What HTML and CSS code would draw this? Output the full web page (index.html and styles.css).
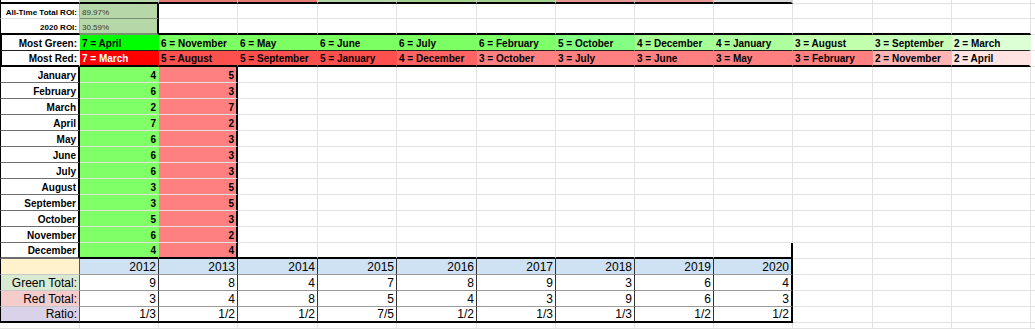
FILE: index.html
```html
<!DOCTYPE html>
<html>
<head>
<meta charset="utf-8">
<link rel="stylesheet" href="styles.css">
</head>
<body>
<div class="sheet">
  <!-- row 0 (partial) -->
  <div class="lb t0"></div>
  <div class="t0 tg"></div>
  <div class="t0 tr"></div>
  <div class="t0 tr"></div>
  <div class="t0 tg"></div>
  <div class="t0 tg2"></div>
  <div class="t0 tg2"></div>
  <div class="t0 tr2"></div>
  <div class="t0 tr2"></div>
  <div class="t0 tgray br2"></div>
  <div></div><div></div><div></div><div></div>

  <!-- row 1 -->
  <div class="lb lab8 ra">All-Time Total ROI:</div>
  <div class="roi">89.97%</div>
  <div></div><div></div><div></div><div></div><div></div><div></div><div></div><div></div><div></div><div></div><div></div><div></div>

  <!-- row 2 -->
  <div class="lb lab8 ra bb2">2020 ROI:</div>
  <div class="roi bb2">30.59%</div>
  <div class="bb2"></div><div class="bb2"></div><div class="bb2"></div><div class="bb2"></div><div class="bb2"></div><div class="bb2"></div><div class="bb2"></div><div class="bb2"></div><div class="bb2"></div><div class="bb2"></div><div class="bb2"></div><div></div>

  <!-- Most Green -->
  <div class="lb2 hlab ra hrow-g">Most Green:</div>
  <div class="h hrow-g g7">7 = April</div>
  <div class="h hrow-g g6">6 = November</div>
  <div class="h hrow-g g6">6 = May</div>
  <div class="h hrow-g g6">6 = June</div>
  <div class="h hrow-g g6">6 = July</div>
  <div class="h hrow-g g6b">6 = February</div>
  <div class="h hrow-g g5">5 = October</div>
  <div class="h hrow-g g4">4 = December</div>
  <div class="h hrow-g g4b">4 = January</div>
  <div class="h hrow-g g3">3 = August</div>
  <div class="h hrow-g g3b">3 = September</div>
  <div class="h hrow-g g2 br2">2 = March</div>
  <div></div>

  <!-- Most Red -->
  <div class="lb2 hlab ra bb2">Most Red:</div>
  <div class="h bb2 r7">7 = March</div>
  <div class="h bb2 r5">5 = August</div>
  <div class="h bb2 r5">5 = September</div>
  <div class="h bb2 r5">5 = January</div>
  <div class="h bb2 r4">4 = December</div>
  <div class="h bb2 r3">3 = October</div>
  <div class="h bb2 r3">3 = July</div>
  <div class="h bb2 r3">3 = June</div>
  <div class="h bb2 r3">3 = May</div>
  <div class="h bb2 r3">3 = February</div>
  <div class="h bb2 r2">2 = November</div>
  <div class="h bb2 r2b br2">2 = April</div>
  <div></div>

  <!-- months -->
  <div class="lb mon">January</div><div class="mg">4</div><div class="mr">5</div>
  <div></div><div></div><div></div><div></div><div></div><div></div><div></div><div></div><div></div><div></div><div></div>
  <div class="lb mon">February</div><div class="mg">6</div><div class="mr">3</div>
  <div></div><div></div><div></div><div></div><div></div><div></div><div></div><div></div><div></div><div></div><div></div>
  <div class="lb mon">March</div><div class="mg">2</div><div class="mr">7</div>
  <div></div><div></div><div></div><div></div><div></div><div></div><div></div><div></div><div></div><div></div><div></div>
  <div class="lb mon">April</div><div class="mg">7</div><div class="mr">2</div>
  <div></div><div></div><div></div><div></div><div></div><div></div><div></div><div></div><div></div><div></div><div></div>
  <div class="lb mon">May</div><div class="mg">6</div><div class="mr">3</div>
  <div></div><div></div><div></div><div></div><div></div><div></div><div></div><div></div><div></div><div></div><div></div>
  <div class="lb mon">June</div><div class="mg">6</div><div class="mr">3</div>
  <div></div><div></div><div></div><div></div><div></div><div></div><div></div><div></div><div></div><div></div><div></div>
  <div class="lb mon">July</div><div class="mg">6</div><div class="mr">3</div>
  <div></div><div></div><div></div><div></div><div></div><div></div><div></div><div></div><div></div><div></div><div></div>
  <div class="lb mon">August</div><div class="mg">3</div><div class="mr">5</div>
  <div></div><div></div><div></div><div></div><div></div><div></div><div></div><div></div><div></div><div></div><div></div>
  <div class="lb mon">September</div><div class="mg">3</div><div class="mr">5</div>
  <div></div><div></div><div></div><div></div><div></div><div></div><div></div><div></div><div></div><div></div><div></div>
  <div class="lb mon">October</div><div class="mg">5</div><div class="mr">3</div>
  <div></div><div></div><div></div><div></div><div></div><div></div><div></div><div></div><div></div><div></div><div></div>
  <div class="lb mon">November</div><div class="mg">6</div><div class="mr">2</div>
  <div></div><div></div><div></div><div></div><div></div><div></div><div></div><div></div><div></div><div></div><div></div>
  <div class="lb mon bb2">December</div><div class="mg bb2">4</div><div class="mr bb2">4</div>
  <div class="bb2"></div><div class="bb2"></div><div class="bb2"></div><div class="bb2"></div><div class="bb2"></div><div class="bb2"></div><div class="bb2 br2"></div><div></div><div></div><div></div><div></div>

  <!-- year header -->
  <div class="lb sum ya"></div>
  <div class="yv yr">2012</div><div class="yv yr">2013</div><div class="yv yr">2014</div><div class="yv yr">2015</div><div class="yv yr">2016</div><div class="yv yr">2017</div><div class="yv yr">2018</div><div class="yv yr">2019</div><div class="yv yr br2">2020</div>
  <div></div><div></div><div></div><div></div>

  <!-- green total -->
  <div class="lb sum sg">Green Total:</div>
  <div class="yv">9</div><div class="yv">8</div><div class="yv">4</div><div class="yv">7</div><div class="yv">8</div><div class="yv">9</div><div class="yv">3</div><div class="yv">6</div><div class="yv br2">4</div>
  <div></div><div></div><div></div><div></div>

  <!-- red total -->
  <div class="lb sum sr">Red Total:</div>
  <div class="yv">3</div><div class="yv">4</div><div class="yv">8</div><div class="yv">5</div><div class="yv">4</div><div class="yv">3</div><div class="yv">9</div><div class="yv">6</div><div class="yv br2">3</div>
  <div></div><div></div><div></div><div></div>

  <!-- ratio -->
  <div class="lb sum sp bb2">Ratio:</div>
  <div class="yv bb2">1/3</div><div class="yv bb2">1/2</div><div class="yv bb2">1/2</div><div class="yv bb2">7/5</div><div class="yv bb2">1/2</div><div class="yv bb2">1/3</div><div class="yv bb2">1/3</div><div class="yv bb2">1/2</div><div class="yv bb2 br2">1/2</div>
  <div></div><div></div><div></div><div></div>

  <!-- trailing row -->
  <div></div><div></div><div></div><div></div><div></div><div></div><div></div><div></div><div></div><div></div><div></div><div></div><div></div><div></div>
</div>
</body>
</html>
```

FILE: styles.css
```css
html, body {
  margin: 0;
  padding: 0;
  background: #ffffff;
}

body {
  font-family: "Liberation Sans", Arial, sans-serif;
  color: #000;
  overflow: hidden;
}

.sheet {
  display: grid;
  grid-template-columns: 80px 79px 79px 80px 79px 80px 79px 79px 79px 79px 80px 79px 79px 4px;
  grid-template-rows: 4px 15px 16px 16px 16px repeat(12, 16px) 16px 16px 16px 16px 6px;
  width: 1035px;
}

.sheet > div {
  box-sizing: border-box;
  border-right: 1px solid #e2e2e2;
  border-bottom: 1px solid #e2e2e2;
  overflow: hidden;
  white-space: nowrap;
  display: flex;
  align-items: flex-end;
  padding: 0 2px 1px 2px;
}

.ra { justify-content: flex-end; }

.lb { border-left: 1px solid #000; }
.lb2 { border-left: 2px solid #000; }
.sheet > .bb2 { border-bottom: 2px solid #000; }
.sheet > .br2 { border-right: 2px solid #000; }

/* top partial row */
.sheet > .t0 { border-bottom: 2px solid #000; border-right-color: #d0d0d0; }
.tg { background: #b6d7a8; }
.tg2 { background: #a4d38f; }
.tr { background: #e67c73; }
.tr2 { background: #ea9999; }
.tgray { background: #d9d9d9; }

/* ROI rows */
.lab8 {
  font-size: 8px;
  font-weight: bold;
  border-right-color: #b0b0b0 !important;
  border-bottom-color: #b0b0b0;
}
.roi {
  background: #b6d7a8;
  font-size: 8px;
  color: #3a3a3a;
  border-right: 2px solid #000 !important;
  border-bottom-color: #7a8f72 !important;
}

/* most green / red rows */
.hlab {
  font-size: 10px;
  font-weight: bold;
  border-right-color: transparent !important;
}
.h {
  font-size: 10px;
  font-weight: bold;
  border-right-color: transparent !important;
}
.sheet > .hrow-g { border-bottom: 1px solid #222; }
.sheet > .hlab.hrow-g { border-bottom: 1px solid #222; }

.g7 { background: #00ff00; }
.g6 { background: #7cff63; }
.g6b { background: #7fff6a; }
.g5 { background: #84ff84; }
.g4 { background: #a6ff94; }
.g4b { background: #acff9c; }
.g3 { background: #c2ffac; }
.g3b { background: #c8ffb8; }
.g2 { background: #dcffd6; }

.r7 { background: #ff0000; color: #fff; }
.r5 { background: #ff5050; }
.r4 { background: #ff6464; }
.r3 { background: #ff8080; }
.r2 { background: #ffb3b3; }
.r2b { background: #ffe3e3; }

/* months */
.mon {
  font-size: 10px;
  font-weight: bold;
  justify-content: flex-end;
  border-right: 2px solid #000 !important;
  border-bottom-color: #6e6e6e !important;
}
.mg {
  background: #80ff66;
  font-size: 10px;
  font-weight: bold;
  justify-content: flex-end;
  border-right-color: #80ff66 !important;
  border-bottom-color: #80ff66;
}
.mr {
  background: #ff8080;
  font-size: 10px;
  font-weight: bold;
  justify-content: flex-end;
  border-right: 2px solid #000 !important;
  border-bottom-color: #ff8080;
}
.sheet > .mg.bb2, .sheet > .mr.bb2 { border-bottom: 2px solid #000; }

/* summary table */
.sum {
  font-size: 12px;
  justify-content: flex-end;
  border-right: 1px solid #555 !important;
  border-bottom-color: #c8c8c8 !important;
  padding-bottom: 0 !important;
}
.ya { background: #fff2cc; }
.sg { background: #d9ead3; }
.sr { background: #f4cccc; }
.sp { background: #d9d2e9; }
.sheet > .sum.bb2 { border-bottom: 2px solid #000 !important; }

.yv {
  font-size: 12px;
  justify-content: flex-end;
  border-right: 1px solid #333 !important;
  border-bottom-color: #9a9a9a !important;
  padding-bottom: 0 !important;
}
.sheet > .yv.br2 { border-right: 2px solid #000 !important; }
.sheet > .yv.bb2 { border-bottom: 2px solid #000 !important; }
.yr { background: #cfe2f3; }
```
